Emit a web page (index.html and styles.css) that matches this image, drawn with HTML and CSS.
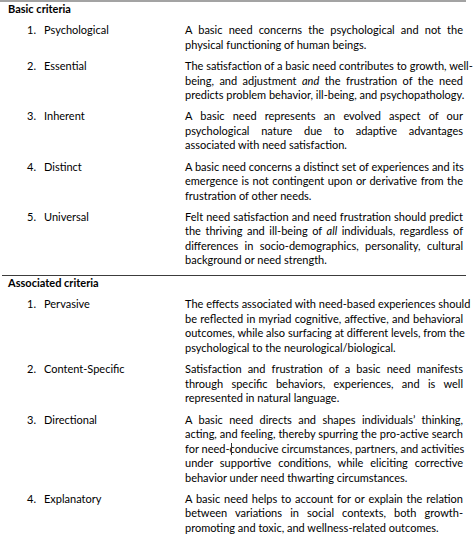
FILE: index.html
```html
<!DOCTYPE html>
<html>
<head>
<meta charset="utf-8">
<link rel="stylesheet" href="styles.css">
</head>
<body>
<div class="table">
  <div class="section">
    <div class="head">Basic criteria</div>
    <div class="row">
      <div class="num">1.</div><div class="label">Psychological</div>
      <div class="desc">
        <span class="ln">A basic need concerns the psychological and not the</span>
        <span class="ln">physical functioning of human beings.</span>
      </div>
    </div>
    <div class="row">
      <div class="num">2.</div><div class="label">Essential</div>
      <div class="desc">
        <span class="ln">The satisfaction of a basic need contributes to growth, well-</span>
        <span class="ln">being, and adjustment <em>and</em> the frustration of the need</span>
        <span class="ln">predicts problem behavior, ill-being, and psychopathology.</span>
      </div>
    </div>
    <div class="row">
      <div class="num">3.</div><div class="label">Inherent</div>
      <div class="desc">
        <span class="ln">A basic need represents an evolved aspect of our</span>
        <span class="ln">psychological nature due to adaptive advantages</span>
        <span class="ln">associated with need satisfaction.</span>
      </div>
    </div>
    <div class="row">
      <div class="num">4.</div><div class="label">Distinct</div>
      <div class="desc">
        <span class="ln">A basic need concerns a distinct set of experiences and its</span>
        <span class="ln">emergence is not contingent upon or derivative from the</span>
        <span class="ln">frustration of other needs.</span>
      </div>
    </div>
    <div class="row">
      <div class="num">5.</div><div class="label">Universal</div>
      <div class="desc">
        <span class="ln">Felt need satisfaction and need frustration should predict</span>
        <span class="ln">the thriving and ill-being of <em>all</em> individuals, regardless of</span>
        <span class="ln">differences in socio-demographics, personality, cultural</span>
        <span class="ln">background or need strength.</span>
      </div>
    </div>
  </div>
  <div class="divider"></div>
  <div class="section second">
    <div class="head">Associated criteria</div>
    <div class="row">
      <div class="num">1.</div><div class="label">Pervasive</div>
      <div class="desc">
        <span class="ln">The effects associated with need-based experiences should</span>
        <span class="ln">be reflected in myriad cognitive, affective, and behavioral</span>
        <span class="ln">outcomes, while also surfacing at different levels, from the</span>
        <span class="ln">psychological to the neurological/biological.</span>
      </div>
    </div>
    <div class="row">
      <div class="num">2.</div><div class="label">Content-Specific</div>
      <div class="desc">
        <span class="ln">Satisfaction and frustration of a basic need manifests</span>
        <span class="ln">through specific behaviors, experiences, and is well</span>
        <span class="ln">represented in natural language.</span>
      </div>
    </div>
    <div class="row">
      <div class="num">3.</div><div class="label">Directional</div>
      <div class="desc">
        <span class="ln">A basic need directs and shapes individuals’ thinking,</span>
        <span class="ln">acting, and feeling, thereby spurring the pro-active search</span>
        <span class="ln">for need-<span class="caret">c</span>onducive circumstances, partners, and activities</span>
        <span class="ln">under supportive conditions, while eliciting corrective</span>
        <span class="ln">behavior under need thwarting circumstances.</span>
      </div>
    </div>
    <div class="row">
      <div class="num">4.</div><div class="label">Explanatory</div>
      <div class="desc">
        <span class="ln">A basic need helps to account for or explain the relation</span>
        <span class="ln">between variations in social contexts, both growth-</span>
        <span class="ln">promoting and toxic, and wellness-related outcomes.</span>
      </div>
    </div>
  </div>
  <div class="bottom"></div>
</div>
</body>
</html>
```
FILE: styles.css
```css
html, body {
  margin: 0;
  padding: 0;
  background: #ffffff;
}
body {
  font-family: Lato, "Liberation Sans", sans-serif;
  font-size: 11px;
  line-height: 14.5px;
  color: #000000;
}
.table {
  width: 466px;
  border-top: 2px solid #a3a3a3;
}
.section {
  display: flex;
  flex-direction: column;
  gap: 6.8px;
  padding-bottom: 6.8px;
}
.second {
  padding-bottom: 9.5px;
}
.head {
  font-weight: 700;
  padding-left: 8px;
}
.row {
  display: grid;
  grid-template-columns: 17px 141px 278px;
  padding-left: 27px;
}
.desc {
  display: flex;
  flex-direction: column;
}
.ln {
  display: block;
  white-space: nowrap;
  text-align: justify;
  text-align-last: justify;
}
.ln:last-child {
  text-align-last: left;
}
em {
  font-style: italic;
}
.caret {
  position: relative;
}
.caret::after {
  content: "";
  position: absolute;
  left: 1.5px;
  top: 1px;
  height: 12px;
  width: 1px;
  background: #333;
}
.divider {
  margin-left: 2px;
  height: 1.4px;
  background: #3c3c3c;
}
.bottom {
  margin-left: 3px;
  margin-top: -1.8px;
  height: 4px;
  background: #5c5c5c;
}
```
